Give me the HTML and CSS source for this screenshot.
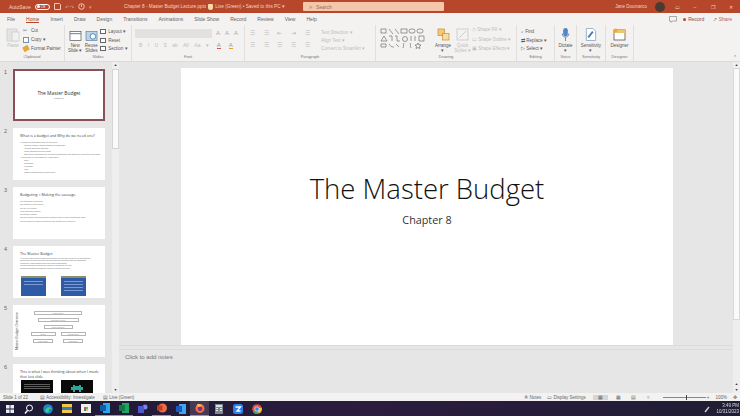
FILE: index.html
```html
<!DOCTYPE html>
<html lang="en">
<head>
<meta charset="utf-8">
<title>Chapter 8 - Master Budget</title>
<link rel="stylesheet" href="styles.css">
</head>
<body>
<div class="app">
  <header class="titlebar">
    <div class="tb-left">
      <span>AutoSave</span><span class="toggle"><i></i>Off</span>
      <svg width="7" height="7" viewBox="0 0 7 7"><path d="M.5.5h5l1 1v5h-6z" fill="none" stroke="#f3c9b8"/></svg>
      <span class="dim">↶ ↷</span>
      <svg width="7" height="7" viewBox="0 0 7 7"><circle cx="3.5" cy="3.5" r="2.8" fill="none" stroke="#f3c9b8"/><path d="M3.5 1.8v2" stroke="#f3c9b8"/></svg>
      <span class="dim">▾</span>
    </div>
    <div class="tb-doc"><span>Chapter 8 - Master Budget Lecture.pptx</span><i class="shield"></i><span>Live (Green) • Saved to this PC ▾</span></div>
    <div class="search"><span class="mag">⌕</span>Search</div>
    <div class="tb-right">
      <span class="user">Jane Doumarco</span><span class="avatar"></span>
      <span class="win-btn">▭</span><span class="win-btn">–</span><span class="win-btn">❐</span><span class="win-btn">✕</span>
    </div>
  </header>

  <div class="tabs">
    <nav class="tablist">
      <span>File</span><span class="active">Home</span><span>Insert</span><span>Draw</span><span>Design</span><span>Transitions</span><span>Animations</span><span>Slide Show</span><span>Record</span><span>Review</span><span>View</span><span>Help</span>
    </nav>
    <div class="tab-actions">
      <svg width="8" height="7" viewBox="0 0 8 7"><path d="M.5.5h7v4.500h-4l-1.500 1.500v-1.500h-1.500z" fill="none" stroke="#8a8a8a" stroke-width=".7"/></svg>
      <span class="rec-btn"><i></i>Record</span>
      <span class="share-btn">↗ Share</span>
    </div>
  </div>

  <section class="ribbon">
    <div class="group g-clip">
      <div class="gbody clip">
        <div class="paste"><svg width="14" height="15" viewBox="0 0 14 15"><rect x="1" y="2" width="10" height="12" fill="#e4e4e4" stroke="#c9c9c9" stroke-width=".7"/><rect x="6" y="5" width="7" height="9" fill="#f1f1f1" stroke="#c9c9c9" stroke-width=".7"/></svg><span>Paste</span></div>
        <div class="clip-list">
          <span><b class="ic-cut">✂</b>Cut</span>
          <span><b class="ic-copy"></b>Copy ▾</span>
          <span><b class="ic-fmt"></b>Format Painter</span>
        </div>
      </div>
      <div class="glabel">Clipboard</div>
    </div>
    <div class="group g-slides">
      <div class="gbody slides">
        <div class="bigbtn"><svg width="13" height="12" viewBox="0 0 13 12"><rect x=".5" y="1.500" width="12" height="10" fill="#fff" stroke="#5a5a5a" stroke-width=".8"/><path d="M.5 4h12" stroke="#3f7fb5"/></svg><span>New<br>Slide ▾</span></div>
        <div class="bigbtn"><svg width="13" height="12" viewBox="0 0 13 12"><rect x=".5" y="1.500" width="12" height="10" fill="#bcd2e6" stroke="#6d8aa5" stroke-width=".8"/><circle cx="8" cy="7" r="3" fill="#fff" stroke="#3f7fb5"/></svg><span>Reuse<br>Slides</span></div>
        <div class="slide-list">
          <span><b class="sq"></b>Layout ▾</span>
          <span><b class="sq"></b>Reset</span>
          <span><b class="sq"></b>Section ▾</span>
        </div>
      </div>
      <div class="glabel">Slides</div>
    </div>
    <div class="group g-font">
      <div class="gbody font">
        <div class="font-row"><span class="fontbox"></span><span class="dis sizes">A A A</span></div>
        <div class="font-row lower"><span class="dis fmt">B I U S ab AV Aa ▾</span><span class="col-a">A</span><span class="col-b">A</span></div>
      </div>
      <div class="glabel">Font</div>
    </div>
    <div class="group g-para">
      <div class="gbody para">
        <div class="para-left">
          <div class="dis wide">☰ ☰ ⇤ ⇥ ☰</div>
          <div class="dis wide">☰ ☰ ☰ ☰ ☰</div>
        </div>
        <div class="para-right dis">
          <span>Text Direction ▾</span><span>Align Text ▾</span><span>Convert to SmartArt ▾</span>
        </div>
      </div>
      <div class="glabel">Paragraph</div>
    </div>
    <div class="group g-draw">
      <div class="gbody draw">
        <svg class="shapes" width="50" height="22" viewBox="0 0 50 22" fill="none" stroke="#5b5b5b" stroke-width=".6">
          <rect x="1" y="2" width="5" height="4"/><path d="M9 2l4 5M15 2l4 5"/><rect x="21" y="2" width="6" height="4"/><rect x="29" y="2" width="6" height="4" rx="2"/><rect x="37" y="2" width="6" height="4" rx="2"/>
          <path d="M1 14l3-5 3 5zM9 9h3v5M15 9h2v5h3"/><circle cx="25" cy="12" r="2.500"/><path d="M31 9v5M35 9v5M39 9h5v5h-5z"/>
          <path d="M1 17h5v3H1zM9 17c2 3 3 3 5 3M16 17l3 3M24 16c-1 2 0 3-1 5M30 16c1 2 0 3 1 5"/><path d="M38 16l1 2h2l-1.500 1.500.5 2-2-1-2 1 .5-2L35 18h2z"/>
        </svg>
        <div class="bigbtn arr"><svg width="13" height="13" viewBox="0 0 13 13"><rect x="1" y="1" width="6.500" height="6.500" fill="#f3c878" stroke="#c98d2b" stroke-width=".7"/><rect x="5.500" y="5.500" width="6.500" height="6.500" fill="#f7dca6" stroke="#c98d2b" stroke-width=".7"/></svg><span>Arrange<br>▾</span></div>
        <div class="bigbtn quick dis"><svg width="13" height="13" viewBox="0 0 13 13"><rect x="1" y="1" width="11" height="11" fill="#f2f2f2" stroke="#cfcfcf"/><path d="M3 10l7-7" stroke="#cfcfcf"/></svg><span>Quick<br>Styles ▾</span></div>
        <div class="slide-list dis">
          <span>◇ Shape Fill ▾</span><span>▭ Shape Outline ▾</span><span>▣ Shape Effects ▾</span>
        </div>
      </div>
      <div class="glabel">Drawing</div>
    </div>
    <div class="group g-edit">
      <div class="gbody">
        <div class="slide-list edit">
          <span>⌕ Find</span><span>⇄ Replace ▾</span><span>▷ Select ▾</span>
        </div>
      </div>
      <div class="glabel">Editing</div>
    </div>
    <div class="group g-voice">
      <div class="gbody center">
        <div class="bigbtn"><svg width="9" height="14" viewBox="0 0 9 14"><rect x="2" y="0" width="5" height="9" rx="2.500" fill="#4f86c6"/><path d="M1 6c0 5 7 5 7 0M4.500 10v4" stroke="#4f86c6" fill="none"/></svg><span>Dictate<br>▾</span></div>
      </div>
      <div class="glabel">Voice</div>
    </div>
    <div class="group g-sens">
      <div class="gbody center">
        <div class="bigbtn"><svg width="12" height="14" viewBox="0 0 12 14"><path d="M1 .5h7l3 3v10H1z" fill="#fff" stroke="#7a9cc0" stroke-width=".8"/><path d="M3 10l5-6" stroke="#3f7fb5" stroke-width="2"/></svg><span>Sensitivity<br>▾</span></div>
      </div>
      <div class="glabel">Sensitivity</div>
    </div>
    <div class="group g-design">
      <div class="gbody center">
        <div class="bigbtn"><svg width="13" height="13" viewBox="0 0 13 13"><rect x="1" y="2" width="11" height="10" fill="#fff" stroke="#555" stroke-width=".8"/><path d="M1 2h11v3H1z" fill="#f0c36d"/><circle cx="2.500" cy="2.500" r="2" fill="#f0a830"/></svg><span>Designer</span></div>
      </div>
      <div class="glabel">Designer</div>
    </div>
    <span class="collapse">⌃</span>
  </section>

  <main class="workspace">
    <aside class="thumbs">
      <div class="thumb-row"><span class="num first">1</span>
        <div class="thumb selected center-title"><p class="t-main">The Master Budget</p><p class="t-sub">Chapter 8</p></div></div>
      <div class="thumb-row"><span class="num">2</span>
        <div class="thumb"><p class="t-head">What is a budget and Why do we need one?</p>
          <ul class="mini tall">
            <li>A budget is a quantitative plan for the future</li><li class="in">Planning, control, communication and motivation</li><li class="in">Helps to coordinate activities</li><li class="in">Forces managers to think ahead</li><li class="in">Establishes benchmarks for evaluating performance and measuring results over the period</li><li>A budget can be: Participative or Authoritative</li><li class="in">Sales</li><li class="in">Production</li><li class="in">Purchases</li><li class="in">Cash</li><li class="in">Income Statement and balance sheet</li>
          </ul></div></div>
      <div class="thumb-row"><span class="num">3</span>
        <div class="thumb"><p class="t-head">Budgeting = Making the sausage</p>
          <ul class="mini roomy">
            <li>The process of budgeting</li><li>Top-down vs. participative</li><li>Setting the targets</li><li>Cash flow and budgets</li><li>The master budget</li><li>Rolling budgets and continuous planning used by many companies today</li><li>The difference between budgeting and forecasting in practice</li>
          </ul></div></div>
      <div class="thumb-row"><span class="num">4</span>
        <div class="thumb"><p class="t-head">The Master Budget</p>
          <ul class="mini">
            <li>A series of interrelated budgets prepared for a given time period for an organization</li><li>Begins with the sales forecast and ends with the budgeted financial statements</li><li>Prepared by management with input from departments</li><li>Includes operating budgets and financial budgets for the year</li><li>Budgeted statements show the expected results of the plan</li>
          </ul>
          <div class="blue-row"><div class="blue"><i></i><i></i></div><div class="blue"><i></i><i></i><i></i><i></i></div></div></div></div>
      <div class="thumb-row"><span class="num">5</span>
        <div class="thumb chart"><p class="vert">Master Budget Overview</p>
          <div class="flow">
            <span class="b1">Sales budget</span><span class="b2">Production budget</span><span class="b3">Direct materials</span>
            <div class="flow-pair"><span>Selling</span><span>Administrative</span></div>
            <div class="flow-pair narrow"><span>Cash budget</span><span>Statements</span></div>
          </div></div></div>
      <div class="thumb-row"><span class="num">6</span>
        <div class="thumb"><p class="t-head small2">This is what I was thinking about when I made that last slide</p>
          <div class="black-row">
            <div class="black"><i></i><i></i><i></i></div>
            <div class="black invader"><svg width="14" height="7" viewBox="0 0 14 7"><path d="M3 0h2v1h4V0h2v2h2v3h-2v2H9V5H5v2H3V5H1V2h2z" fill="#2aa899"/></svg></div>
          </div></div></div>
    </aside>
    <div class="vscroll left-scroll"><span class="arrow">▲</span><span class="track"><i></i></span><span class="arrow">▼</span></div>
    <div class="editor">
      <div class="stage">
        <article class="slide">
          <h1>The Master Budget</h1>
          <p>Chapter 8</p>
        </article>
      </div>
      <div class="notes-split"></div>
      <div class="notes">Click to add notes</div>
    </div>
    <div class="vscroll right-scroll"><span class="arrow">▲</span><span class="track"><i></i></span><span class="arrow">▲</span><span class="arrow">▼</span></div>
  </main>

  <footer class="status">
    <div class="st-left"><span>Slide 1 of 22</span><span>▤ Accessibility: Investigate</span><span>▤ Live (Green)</span></div>
    <div class="st-right">
      <span>≜ Notes</span><span>▭ Display Settings</span>
      <span class="views"><b class="on">▦</b><b>▦</b><b>▤</b><b>▿</b></span>
      <span class="zoom"><i class="line"><em></em></i>+</span><span>100%</span><span>✥</span>
    </div>
  </footer>

  <div class="taskbar">
    <div class="tasks">
      <span class="task"><svg width="8" height="8" viewBox="0 0 8 8"><path d="M0 0h3.600v3.600H0zM4.400 0H8v3.600H4.400zM0 4.400h3.600V8H0zM4.400 4.400H8V8H4.400z" fill="#e8ecf4"/></svg></span>
      <span class="task"><svg width="10" height="10" viewBox="0 0 10 10" fill="none" stroke="#fff"><circle cx="5.500" cy="4" r="3"/><path d="M3.500 6.500L1 9.500" stroke-width="1.300"/></svg></span>
      <span class="task"><svg width="10" height="10" viewBox="0 0 10 10"><circle cx="5" cy="5" r="4.800" fill="#1c86c9"/><path d="M2 7c1-4 5-5 7-2-2-1-4 0-3 3-2 1-3 0-4-1z" fill="#43c48a"/></svg></span>
      <span class="task"><svg width="10" height="9" viewBox="0 0 10 9"><path d="M0 0h10v9H0z" fill="#f2c744"/><path d="M0 3h10v3H0z" fill="#2f7fc1"/></svg></span>
      <span class="task"><svg width="10" height="9" viewBox="0 0 10 9"><path d="M0 0h10v9H0z" fill="#f0f0f0"/><path d="M3 3h2v2H3z" fill="#e5533d"/><path d="M5 3h2v2H5z" fill="#6ab04c"/><path d="M3 5h2v2H3z" fill="#2f7fc1"/><path d="M5 5h2v2H5z" fill="#f2c744"/></svg></span>
      <span class="task u"><svg width="10" height="10" viewBox="0 0 10 10"><path d="M3 0h7v10H3z" fill="#28a8ea"/><path d="M0 2h6v6H0z" fill="#0f5fa8"/></svg></span>
      <span class="task u"><svg width="10" height="10" viewBox="0 0 10 10"><path d="M3 0h7v10H3z" fill="#21a366"/><path d="M0 2h6v6H0z" fill="#107c41"/></svg></span>
      <span class="task"><svg width="10" height="10" viewBox="0 0 10 10"><circle cx="7" cy="3" r="2.500" fill="#7b83eb"/><path d="M0 2h6v7H0z" fill="#5059c9"/></svg></span>
      <span class="task u"><svg width="10" height="10" viewBox="0 0 10 10"><circle cx="5.500" cy="5" r="4.500" fill="#ed6c47"/><path d="M0 2.500h5.500v5H0z" fill="#c43e1c"/></svg></span>
      <span class="task"><svg width="10" height="10" viewBox="0 0 10 10"><path d="M3 0h7v10H3z" fill="#41a5ee"/><path d="M0 2h6v6H0z" fill="#185abd"/></svg></span>
      <span class="task live"><svg width="10" height="10" viewBox="0 0 10 10"><circle cx="5" cy="5.400" r="4.500" fill="#ff7139"/><circle cx="5" cy="5.800" r="2.400" fill="#7b2f8f"/><path d="M2 1c2 0 4 0 5 2L3 4z" fill="#ffbd4f"/></svg></span>
      <span class="task"><svg width="8" height="10" viewBox="0 0 8 10"><path d="M0 0h8v10H0z" fill="#7c8a8f"/><path d="M1 1h6v2H1z" fill="#cfe3e8"/><path d="M1 4h2v1H1zM5 4h2v1H5zM1 6h2v1H1zM5 6h2v1H5z" fill="#e8e8e8"/></svg></span>
      <span class="task"><svg width="10" height="10" viewBox="0 0 10 10"><rect width="10" height="10" rx="2.500" fill="#2d7ff0"/><path d="M2.500 3h5L4 7h3.500" fill="none" stroke="#fff" stroke-width="1.300"/></svg></span>
      <span class="task"><svg width="10" height="10" viewBox="0 0 10 10"><circle cx="5" cy="5" r="4.800" fill="#e2513f"/><path d="M5 5L.8 7.500A4.800 4.800 0 0 0 7 9.500z" fill="#4aa757"/><path d="M5 5l4.500-1.500A4.800 4.800 0 0 1 7 9.500z" fill="#f5c332"/><circle cx="5" cy="5" r="2.200" fill="#3f82e8" stroke="#fff" stroke-width=".6"/></svg></span>
    </div>
    <div class="tray">
      <svg width="7" height="8" viewBox="0 0 7 8"><path d="M1 7l4-5" stroke="#cfcfd6" stroke-width="1.400"/></svg>
      <div class="clock"><span>3:49 PM</span><span>10/31/2023</span></div>
    </div>
  </div>
</div>
</body>
</html>
```

FILE: styles.css
```css
* { box-sizing: border-box; }
html, body { margin: 0; padding: 0; }
body { width: 740px; height: 416px; overflow: hidden; font-family: "Liberation Sans", Arial, sans-serif; background: #e6e6e6; }
p, ul, h1 { margin: 0; padding: 0; }
ul { list-style: none; }
.app { width: 740px; height: 416px; display: flex; flex-direction: column; background: #e6e6e6; color: #444; filter: blur(.35px); }

/* title bar */
.titlebar { height: 13px; flex: none; background: #b7472a; color: #f5d3c6; font-size: 5px; display: flex; align-items: center; }
.tb-left { width: 124px; padding-left: 9px; display: flex; align-items: center; gap: 4px; }
.toggle { width: 15px; height: 6px; border: 1px solid #fff; border-radius: 3px; display: flex; align-items: center; gap: 1px; font-size: 3.500px; color: #fff; }
.toggle i { width: 3px; height: 3px; border-radius: 50%; background: #fff; margin-left: 1px; }
.dim { opacity: .6; }
.tb-doc { width: 179px; display: flex; align-items: center; gap: 2px; white-space: nowrap; font-size: 4.700px; }
.shield { width: 5px; height: 6px; border-radius: 1px 1px 3px 3px; background: #f7d9a8; }
.search { width: 141px; height: 9px; background: #f6c6ab; color: #a06a52; display: flex; align-items: center; gap: 3px; padding-left: 6px; border-radius: 1px; }
.mag { font-size: 7px; line-height: 1; }
.tb-right { flex: 1; display: flex; justify-content: flex-end; align-items: center; }
.user { margin-right: 8px; font-size: 4.500px; white-space: nowrap; }
.avatar { width: 10px; height: 10px; border-radius: 50%; background: #4a3a32; margin-right: 3px; }
.win-btn { width: 18px; text-align: center; font-size: 5px; }

/* tabs */
.tabs { height: 11px; flex: none; background: #f3f2f1; display: flex; justify-content: space-between; font-size: 5px; color: #666; align-items: center; padding-top: 1px; }
.tablist { display: flex; padding-left: 7px; }
.tablist span { margin-right: 11px; white-space: nowrap; }
.tablist .active { color: #a8442a; border-bottom: 1px solid #b7472a; line-height: 6px; }
.tab-actions { display: flex; align-items: center; gap: 6px; padding-right: 5px; }
.rec-btn { display: flex; align-items: center; gap: 2px; color: #8a4a3c; }
.rec-btn i { width: 3px; height: 3px; border-radius: 50%; background: #b7472a; }
.share-btn { color: #b7654f; padding: 0 3px; }

/* ribbon */
.ribbon { height: 38px; flex: none; background: #f3f2f1; border-bottom: 1px solid #dcdbda; display: flex; font-size: 4.500px; color: #555; position: relative; }
.collapse { position: absolute; right: 3px; bottom: 1px; font-size: 5px; line-height: 5px; color: #777; }
.group { flex: none; display: flex; flex-direction: column; border-right: 1px solid #e0dfde; margin: 1px 0 0; }
.gbody { flex: 1; display: flex; min-height: 0; }
.center { justify-content: center; }
.glabel { height: 8px; line-height: 7px; text-align: center; font-size: 4px; color: #777; }
.g-clip { width: 65px; } .g-slides { width: 67px; } .g-font { width: 113px; } .g-para { width: 131px; }
.g-draw { width: 141px; } .g-edit { width: 38px; } .g-voice { width: 22px; } .g-sens { width: 29px; } .g-design { width: 28px; }
.clip { padding: 2px 0 0 6px; gap: 3px; }
.paste { display: flex; flex-direction: column; align-items: center; color: #bbb; width: 14px; gap: 1px; }
.clip-list, .slide-list { display: flex; flex-direction: column; justify-content: space-between; padding: 1px 0 2px; white-space: nowrap; }
.clip-list span, .slide-list span { display: flex; align-items: center; gap: 2px; }
.ic-cut { font-weight: normal; color: #4a6fa5; font-size: 5px; line-height: 5px; width: 6px; }
.ic-copy { width: 6px; height: 6px; border: 1px solid #7391b5; background: #fff; }
.ic-fmt { width: 6px; height: 5px; background: #e6a73c; transform: rotate(-30deg); }
.slides { padding: 3px 0 0 3px; gap: 2px; }
.bigbtn { display: flex; flex-direction: column; align-items: center; gap: 2px; text-align: center; line-height: 5px; padding-top: 2px; white-space: nowrap; min-width: 14px; }
.sq { width: 6px; height: 5px; border: 1px solid #666; background: #fff; }
.font { flex-direction: column; padding: 4px 0 0 3px; gap: 4px; }
.font-row { display: flex; align-items: center; gap: 4px; height: 8px; }
.lower { padding-left: 4px; gap: 8px; }
.fontbox { width: 77px; height: 9px; background: #e2e1e0; }
.dis { color: #bdbdbd; }
.sizes { font-size: 6px; word-spacing: 4px; color: #aaa; }
.fmt { font-size: 5px; word-spacing: 4px; white-space: nowrap; }
.col-a { border-bottom: 1px solid #c55; color: #999; font-size: 6px; line-height: 6px; }
.col-b { border-bottom: 1px solid #e0a030; color: #999; font-size: 6px; line-height: 6px; }
.para { padding: 4px 0 0 5px; gap: 7px; }
.para-left { display: flex; flex-direction: column; gap: 4px; width: 64px; }
.wide { font-size: 6px; letter-spacing: 3.500px; line-height: 8px; white-space: nowrap; }
.para-right { display: flex; flex-direction: column; gap: 3px; padding-top: 1px; white-space: nowrap; }
.draw { padding: 1px 0 0 4px; }
.shapes { flex: none; margin: 1px 3px 0 0; }
.arr { width: 20px; flex: none; }
.quick { width: 19px; flex: none; }
.edit { padding: 4px 0 2px 4px; color: #555; }
.g-voice .bigbtn, .g-sens .bigbtn, .g-design .bigbtn { padding-top: 3px; }

/* workspace */
.workspace { flex: 1; min-height: 0; display: flex; background: #e6e6e6; }
.thumbs { width: 112px; flex: none; padding-top: 7px; overflow: hidden; display: flex; flex-direction: column; gap: 7px; }
.thumb-row { display: flex; height: 52px; flex: none; position: relative; padding-left: 13px; }
.num { position: absolute; left: 4px; top: 0; font-size: 5.500px; color: #666; }
.num.first { color: #a8442a; }
.thumb { width: 92px; height: 52px; background: #fff; overflow: hidden; padding: 4px 6px; color: #666; font-family: "Open Sans", sans-serif; }
.selected { border: 2px solid #8b4f5a; }
.center-title { display: flex; flex-direction: column; align-items: center; justify-content: center; }
.t-main { font-size: 4.900px; color: #333; white-space: nowrap; }
.t-sub { font-size: 2.200px; margin-top: 1px; }
.t-head { font-size: 3.700px; color: #444; white-space: nowrap; margin: 1px 0 2px 1px; }
.small2 { white-space: normal; line-height: 5px; width: 80px; margin-bottom: 0; }
.mini { font-size: 1.800px; line-height: 2.400px; white-space: nowrap; margin-left: 1px; }
.mini .in { padding-left: 4px; }
.tall { line-height: 3px; margin-top: 3px; }
.roomy { font-size: 1.950px; line-height: 3.300px; margin-top: 3px; }
.blue-row { display: flex; gap: 15px; padding: 6px 0 0 2px; }
.blue { width: 25px; height: 20px; flex: none; background: #2f5aa6; border-top: 2px solid #8a8f6e; padding: 3px; display: flex; flex-direction: column; gap: 2px; }
.blue i { display: block; height: 1px; background: #7d9ad0; }
.chart { padding: 3px 0 0 0; display: flex; }
.vert { writing-mode: vertical-rl; transform: rotate(180deg); font-size: 3.300px; margin-left: 1px; width: 6px; text-align: center; height: 46px; white-space: nowrap; color: #444; }
.flow { font-size: 1.700px; display: flex; flex-direction: column; align-items: center; gap: 3px; width: 70px; margin-left: 3px; padding-top: 3px; color: #888; }
.flow span { display: block; border: 1px solid #b5b5b5; height: 4px; line-height: 2px; text-align: center; background: #fff; }
.b1 { width: 48px; } .b2 { width: 41px; } .b3 { width: 29px; }
.flow-pair { display: flex; gap: 5px; }
.flow-pair span { width: 25px; }
.flow-pair.narrow { gap: 10px; }
.flow-pair.narrow span { width: 20px; }
.black-row { display: flex; gap: 8px; padding: 1px 0 0 2px; }
.black { width: 32px; height: 20px; flex: none; background: #0a0a0a; padding: 4px 3px; display: flex; flex-direction: column; gap: 1px; }
.black i { display: block; height: 1px; background: #5e5e5e; }
.invader { align-items: center; padding: 5px 0 0; }
.vscroll { width: 7px; flex: none; display: flex; flex-direction: column; background: #eeeeee; font-size: 3.500px; color: #333; align-items: center; }
.arrow { height: 6px; line-height: 6px; flex: none; }
.track { flex: 1; width: 100%; }
.left-scroll .track i { display: block; height: 80px; background: #fafafa; border: 1px solid #d5d5d5; margin-top: 1px; }
.editor { flex: 1; min-width: 0; display: flex; flex-direction: column; }
.stage { height: 283px; padding: 6px 0 0 62px; flex: none; }
.slide { width: 492px; height: 277px; background: #fff; display: flex; flex-direction: column; align-items: center; padding-top: 104px; color: #111; font-family: "Open Sans", sans-serif; }
.slide h1 { font-weight: 300; font-size: 27.500px; line-height: 34px; white-space: nowrap; }
.slide p { font-size: 10.800px; line-height: 16px; margin-top: 6px; color: #333; }
.notes-split { height: 5px; border-top: 1px solid #dcdcdc; border-bottom: 1px solid #dcdcdc; flex: none; }
.notes { flex: 1; font-size: 6px; padding: 4px 0 0 6px; color: #777; }
.right-scroll .track i { display: block; height: 252px; background: #fafafa; border: 1px solid #d9d9d9; }

/* status bar */
.status { height: 8px; flex: none; background: #f3f2f1; font-size: 4.500px; color: #666; display: flex; justify-content: space-between; align-items: center; }
.st-left { display: flex; padding-left: 3px; white-space: nowrap; }
.st-left span:nth-child(1) { width: 37px; }
.st-left span:nth-child(2) { width: 63px; }
.st-right { display: flex; align-items: center; gap: 6px; padding-right: 3px; white-space: nowrap; }
.views { display: flex; gap: 7px; margin: 0 4px 0 1px; }
.views b { font-weight: normal; width: 8px; text-align: center; }
.views .on { background: #d5d5d5; width: 15px; }
.zoom { display: flex; align-items: center; gap: 1px; }
.line { width: 43px; height: 1px; background: #888; display: block; position: relative; }
.line em { position: absolute; left: 23px; top: -2px; width: 1px; height: 5px; background: #444; }

/* taskbar */
.taskbar { height: 15px; flex: none; background: linear-gradient(90deg, #1d1a35 0%, #2c1c3e 50%, #1f1d33 100%); display: flex; justify-content: space-between; align-items: center; }
.tasks { display: flex; height: 100%; }
.task { width: 19px; height: 100%; display: flex; align-items: center; justify-content: center; }
.task.u { border-bottom: 1px solid #7c9cc4; }
.task.live { background: #453a55; border-bottom: 1px solid #7c9cc4; }
.tray { display: flex; align-items: center; gap: 5px; padding-right: 1px; }
.clock { display: flex; flex-direction: column; align-items: flex-end; font-size: 4.500px; line-height: 6px; color: #dcdce4; }
```
